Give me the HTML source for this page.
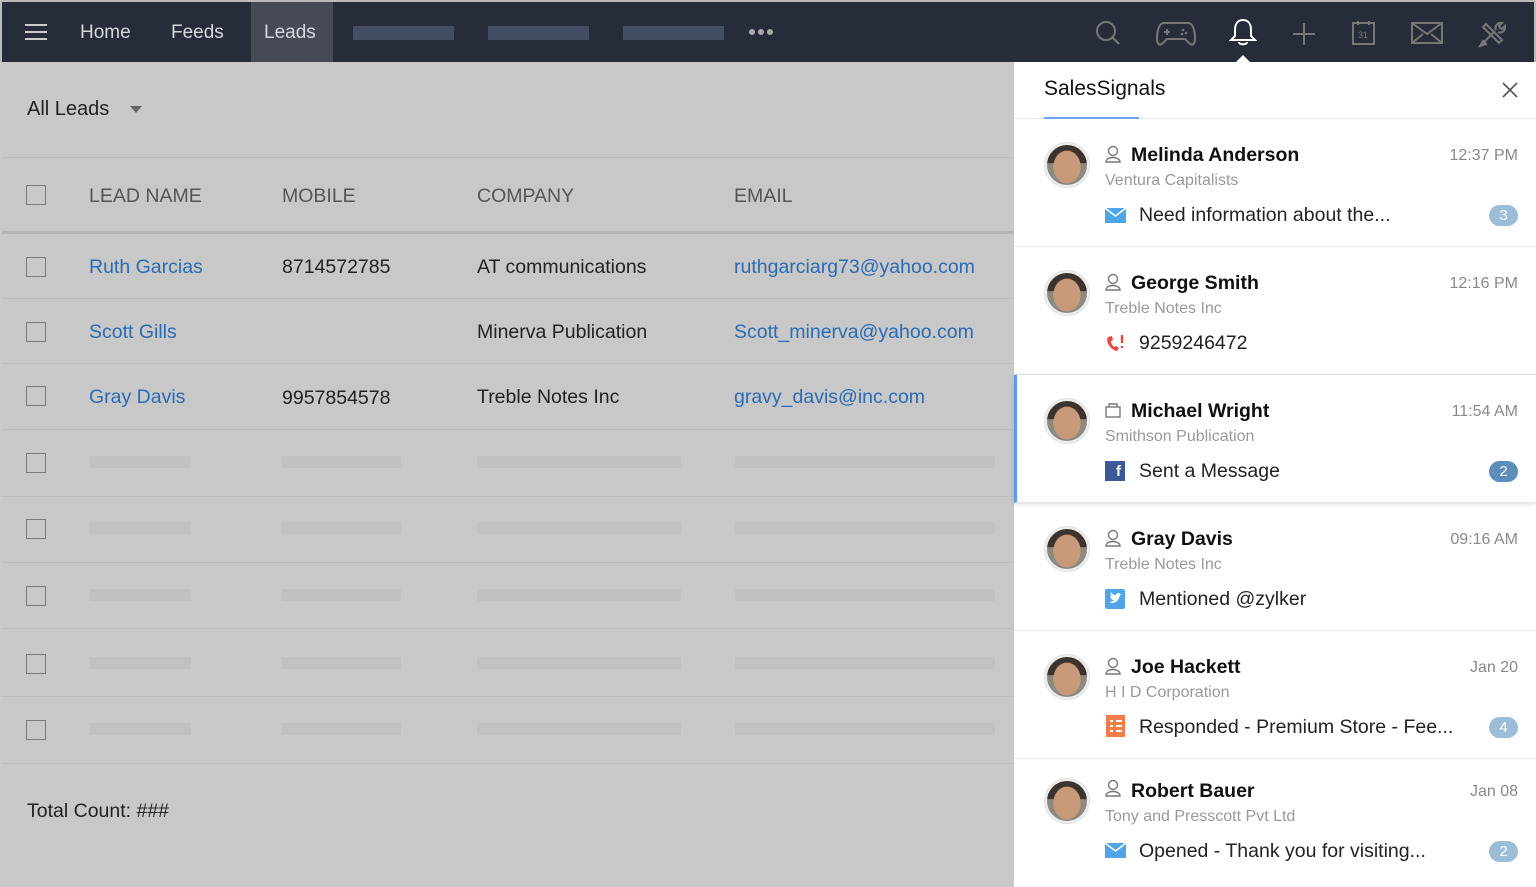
<!DOCTYPE html><html><head><style>
*{margin:0;padding:0;box-sizing:border-box}
body{width:1536px;height:887px;overflow:hidden;font-family:"Liberation Sans",sans-serif;background:#c9c9c9;position:relative}
.nav{position:absolute;left:0;top:0;width:1536px;height:62px;background:#262c39;border-top:2px solid #bbb;border-left:2px solid #bbb;border-right:2px solid #bbb}
.nav .t{position:absolute;top:20px;color:#d6d8dc;font-size:19px}
.bar{position:absolute;top:24px;width:101px;height:14px;background:#434e65}
.ab{position:absolute}
.main{position:absolute;left:2px;top:62px;width:1012px;height:825px;background:#c8c8c8}
.hl{position:absolute;left:0;width:1012px;height:1px;background:#bdbdbd}
.cb{position:absolute;left:24px;width:20px;height:20px;border:1.5px solid #7a7a7a}
.tx{position:absolute;font-size:19.5px;color:#222}
.lk{color:#2a6bb5}
.ph{position:absolute;height:12px;background:#c1c1c1}
.panel{position:absolute;left:1014px;top:62px;width:522px;height:825px;background:#fff}
.card{position:absolute;left:0;width:522px;height:128px;border-bottom:1.5px solid #e4e4e4}
.av{position:absolute;left:31px;top:24px;width:44px;height:44px;border-radius:50%;background:radial-gradient(ellipse 35% 42% at 50% 55%,#c99a7a 0 95%,transparent 100%),linear-gradient(#3d3430 0 45%,#8a8a80 46%);border:2px solid #eee;box-shadow:0 0 0 1px #ddd}
.nm{position:absolute;left:117px;top:25px;font-size:19.5px;font-weight:bold;color:#111}
.pi{position:absolute;left:91px;top:26px;width:16px;height:18px}
.co{position:absolute;left:91px;top:53px;font-size:16px;color:#999}
.tm{position:absolute;right:18px;top:28px;font-size:16px;color:#888}
.ms{position:absolute;left:125px;top:85px;font-size:19.5px;color:#222}
.ic{position:absolute;left:91px;top:86px;width:21px;height:19px}
.bd{position:absolute;right:18px;top:86px;width:29px;height:21px;border-radius:11px;background:#9bbdd7;color:#fff;font-size:15px;text-align:center;line-height:21px}
</style></head><body>
<div class="nav">
<svg class="ab" style="left:22px;top:20px" width="24" height="20"><path d="M1 3h22M1 10h22M1 17h22" stroke="#ccc" stroke-width="2"/></svg>
<div class="t" style="left:78px">Home</div><div class="t" style="left:169px">Feeds</div>
<div class="ab" style="left:249px;top:0;width:82px;height:60px;background:#454a54"></div>
<div class="t" style="left:262px">Leads</div>
<div class="bar" style="left:351px"></div><div class="bar" style="left:486px"></div><div class="bar" style="left:621px"></div>
<svg class="ab" style="left:746px;top:26px" width="26" height="8"><circle cx="4" cy="4" r="3" fill="#aaa"/><circle cx="13" cy="4" r="3" fill="#aaa"/><circle cx="22" cy="4" r="3" fill="#aaa"/></svg>
<svg class="ab" style="left:1092px;top:17px" width="28" height="28"><circle cx="12" cy="12" r="9" stroke="#777" stroke-width="2" fill="none"/><path d="M18 18l7 7" stroke="#777" stroke-width="2"/></svg>
<svg class="ab" style="left:1154px;top:19px" width="40" height="26"><path d="M8 2h24c5 0 7 8 7 15s-3 8-6 5l-4-4H11l-4 4c-3 3-6 2-6-5S3 2 8 2z" stroke="#777" stroke-width="2" fill="none"/><path d="M8 11h6M11 8v6" stroke="#777" stroke-width="2"/><circle cx="27" cy="9" r="1.3" fill="#777"/><circle cx="30" cy="12" r="1.3" fill="#777"/><circle cx="26" cy="13" r="1.3" fill="#777"/></svg>
<svg class="ab" style="left:1227px;top:16px" width="28" height="30"><path d="M14 2c-6 0-8 5-8 10v6l-4 4h24l-4-4v-6c0-5-2-10-8-10zM10 24c0 3 8 3 8 0" stroke="#fff" stroke-width="2" fill="none"/></svg>
<div class="ab" style="left:1232px;top:53px;width:0;height:0;border-left:9px solid transparent;border-right:9px solid transparent;border-bottom:9px solid #fff"></div>
<svg class="ab" style="left:1290px;top:20px" width="24" height="24"><path d="M12 1v22M1 12h22" stroke="#777" stroke-width="2"/></svg>
<svg class="ab" style="left:1350px;top:18px" width="24" height="26"><rect x="1" y="3" width="21" height="21" stroke="#777" stroke-width="2" fill="none"/><path d="M6 1v4M17 1v4" stroke="#777" stroke-width="2"/><text x="6" y="18" font-size="9" fill="#777">31</text></svg>
<svg class="ab" style="left:1409px;top:20px" width="32" height="22"><rect x="1" y="1" width="30" height="20" stroke="#777" stroke-width="2" fill="none"/><path d="M1 1l15 11L31 1M1 21l11-9M31 21l-11-9" stroke="#777" stroke-width="2" fill="none"/></svg>
<svg class="ab" style="left:1476px;top:18px" width="28" height="28"><path d="M4 24l13-13M8 4l16 16-3 3L5 7z" stroke="#777" stroke-width="2" fill="none"/><path d="M18 10c-2-4 2-8 6-7l-3 3 1 2 2 1 3-3c1 4-3 8-7 6M2 26l3-5 3 3z" stroke="#777" stroke-width="2" fill="none"/></svg>
</div>
<div class="main">
<div class="tx" style="left:25px;top:36px;font-size:20px">All Leads</div>
<div class="ab" style="left:128px;top:44px;border-left:6px solid transparent;border-right:6px solid transparent;border-top:7px solid #666"></div>
<div class="hl" style="top:95px"></div>
<div class="cb" style="top:123px"></div>
<div class="tx" style="left:87px;top:123px;color:#555">LEAD NAME</div><div class="tx" style="left:280px;top:123px;color:#555">MOBILE</div><div class="tx" style="left:475px;top:123px;color:#555">COMPANY</div><div class="tx" style="left:732px;top:123px;color:#555">EMAIL</div>
<div class="hl" style="top:169px;height:3px;background:#b5b5b5"></div>
<div class="cb" style="top:195px"></div><div class="tx lk" style="left:87px;top:194px">Ruth Garcias</div><div class="tx" style="left:280px;top:194px">8714572785</div><div class="tx" style="left:475px;top:194px">AT communications</div><div class="tx lk" style="left:732px;top:194px">ruthgarciarg73@yahoo.com</div>
<div class="hl" style="top:236px"></div>
<div class="cb" style="top:260px"></div><div class="tx lk" style="left:87px;top:259px">Scott Gills</div><div class="tx" style="left:475px;top:259px">Minerva Publication</div><div class="tx lk" style="left:732px;top:259px">Scott_minerva@yahoo.com</div>
<div class="hl" style="top:301px"></div>
<div class="cb" style="top:324px"></div><div class="tx lk" style="left:87px;top:324px">Gray Davis</div><div class="tx" style="left:280px;top:325px">9957854578</div><div class="tx" style="left:475px;top:324px">Treble Notes Inc</div><div class="tx lk" style="left:732px;top:324px">gravy_davis@inc.com</div>
<div class="hl" style="top:367px"></div>
<div class="cb" style="top:391px"></div><div class="hl" style="top:434px"></div>
<div class="cb" style="top:457px"></div><div class="hl" style="top:500px"></div>
<div class="cb" style="top:524px"></div><div class="hl" style="top:566px"></div>
<div class="cb" style="top:592px"></div><div class="hl" style="top:634px"></div>
<div class="cb" style="top:658px"></div><div class="hl" style="top:701px"></div>
<div class="ph" style="left:88px;top:394px;width:101px"></div><div class="ph" style="left:280px;top:394px;width:119px"></div><div class="ph" style="left:475px;top:394px;width:204px"></div><div class="ph" style="left:733px;top:394px;width:260px"></div>
<div class="ph" style="left:88px;top:460px;width:101px"></div><div class="ph" style="left:280px;top:460px;width:119px"></div><div class="ph" style="left:475px;top:460px;width:204px"></div><div class="ph" style="left:733px;top:460px;width:260px"></div>
<div class="ph" style="left:88px;top:527px;width:101px"></div><div class="ph" style="left:280px;top:527px;width:119px"></div><div class="ph" style="left:475px;top:527px;width:204px"></div><div class="ph" style="left:733px;top:527px;width:260px"></div>
<div class="ph" style="left:88px;top:595px;width:101px"></div><div class="ph" style="left:280px;top:595px;width:119px"></div><div class="ph" style="left:475px;top:595px;width:204px"></div><div class="ph" style="left:733px;top:595px;width:260px"></div>
<div class="ph" style="left:88px;top:661px;width:101px"></div><div class="ph" style="left:280px;top:661px;width:119px"></div><div class="ph" style="left:475px;top:661px;width:204px"></div><div class="ph" style="left:733px;top:661px;width:260px"></div>
<div class="tx" style="left:25px;top:738px">Total Count: ###</div>
</div>
<div class="panel">
<div class="ab" style="left:30px;top:15px;font-size:21px;color:#111">SalesSignals</div>
<svg class="ab" style="left:488px;top:20px" width="16" height="16"><path d="M1 1l14 14M15 1L1 15" stroke="#555" stroke-width="1.6"/></svg>
<div class="ab" style="left:0;top:56px;width:522px;height:1px;background:#e4e4e4"></div>
<div class="ab" style="left:30px;top:55px;width:95px;height:2px;background:#6aa5ef"></div>
<div class="card" style="top:57px"><div class="av"></div><svg class="pi"><circle cx="8" cy="6" r="4.5" stroke="#777" fill="none" stroke-width="1.4"/><path d="M1 17c0-6 14-6 14 0z" stroke="#777" fill="none" stroke-width="1.4"/></svg><div class="nm">Melinda Anderson</div><div class="tm">12:37 PM</div><div class="co">Ventura Capitalists</div><svg class="ic"><rect y="3" width="21" height="15" fill="#4fa5ea"/><path d="M0 3l10.5 8L21 3" stroke="#fff" stroke-width="1.6" fill="none"/></svg><div class="ms">Need information about the...</div><div class="bd">3</div></div>
<div class="card" style="top:185px"><div class="av"></div><svg class="pi"><circle cx="8" cy="6" r="4.5" stroke="#777" fill="none" stroke-width="1.4"/><path d="M1 17c0-6 14-6 14 0z" stroke="#777" fill="none" stroke-width="1.4"/></svg><div class="nm">George Smith</div><div class="tm">12:16 PM</div><div class="co">Treble Notes Inc</div><svg class="ic"><path d="M3 4c-3 5 3 13 9 14l2-3-3-2-2 1c-2-2-3-4-3-6l2-1-1-4z" fill="#e8473f"/><path d="M17 2v8M17 13v2" stroke="#e8473f" stroke-width="2.4"/></svg><div class="ms">9259246472</div></div>
<div class="card" style="top:313px;box-shadow:0 1px 4px rgba(0,0,0,.15);border-left:3px solid #5b9bef"><div class="av" style="left:28px"></div><svg class="pi" style="left:88px"><rect x="1" y="6" width="14" height="10" stroke="#777" fill="none" stroke-width="1.4"/><path d="M4 6V3h8v3" stroke="#777" fill="none" stroke-width="1.4"/></svg><div class="nm" style="left:114px">Michael Wright</div><div class="tm">11:54 AM</div><div class="co" style="left:88px">Smithson Publication</div><div class="ic" style="left:88px;width:20px;height:20px;background:#3b5998;color:#fff;font-weight:bold;font-size:15px;text-align:right;padding-right:4px;line-height:22px">f</div><div class="ms" style="left:122px">Sent a Message</div><div class="bd" style="background:#5c8dbb">2</div></div>
<div class="card" style="top:441px"><div class="av"></div><svg class="pi"><circle cx="8" cy="6" r="4.5" stroke="#777" fill="none" stroke-width="1.4"/><path d="M1 17c0-6 14-6 14 0z" stroke="#777" fill="none" stroke-width="1.4"/></svg><div class="nm">Gray Davis</div><div class="tm">09:16 AM</div><div class="co">Treble Notes Inc</div><svg class="ic" style="width:20px;height:20px"><rect width="20" height="20" rx="2" fill="#4fa5ea"/><path d="M4 13c3 2 8 1 10-4l1-3 2-1-2 0c-1-2-4-1-4 1-2 0-4-1-5-3-1 2 0 3 1 4-1 0-1 0-2-1 0 2 1 3 2 3h-1c0 1 1 2 3 2-1 1-3 2-5 2z" fill="#fff"/></svg><div class="ms">Mentioned @zylker</div></div>
<div class="card" style="top:569px"><div class="av"></div><svg class="pi"><circle cx="8" cy="6" r="4.5" stroke="#777" fill="none" stroke-width="1.4"/><path d="M1 17c0-6 14-6 14 0z" stroke="#777" fill="none" stroke-width="1.4"/></svg><div class="nm">Joe Hackett</div><div class="tm">Jan 20</div><div class="co">H I D Corporation</div><svg class="ic" style="height:22px;top:84px"><rect x="1" width="19" height="22" fill="#f27d4a"/><path d="M5 6h3M11 6h6M5 11h3M11 11h6M5 16h3M11 16h6" stroke="#fff" stroke-width="2"/></svg><div class="ms">Responded - Premium Store - Fee...</div><div class="bd">4</div></div>
<div class="card" style="top:697px;border:none"><div class="av" style="top:20px"></div><svg class="pi" style="top:20px"><circle cx="8" cy="6" r="4.5" stroke="#777" fill="none" stroke-width="1.4"/><path d="M1 17c0-6 14-6 14 0z" stroke="#777" fill="none" stroke-width="1.4"/></svg><div class="nm" style="top:21px">Robert Bauer</div><div class="tm" style="top:24px">Jan 08</div><div class="co" style="top:49px">Tony and Presscott Pvt Ltd</div><svg class="ic" style="top:81px"><rect y="3" width="21" height="15" fill="#4fa5ea"/><path d="M0 3l10.5 8L21 3" stroke="#fff" stroke-width="1.6" fill="none"/></svg><div class="ms" style="top:81px">Opened - Thank you for visiting...</div><div class="bd" style="top:82px">2</div></div>
</div>
</body></html>
